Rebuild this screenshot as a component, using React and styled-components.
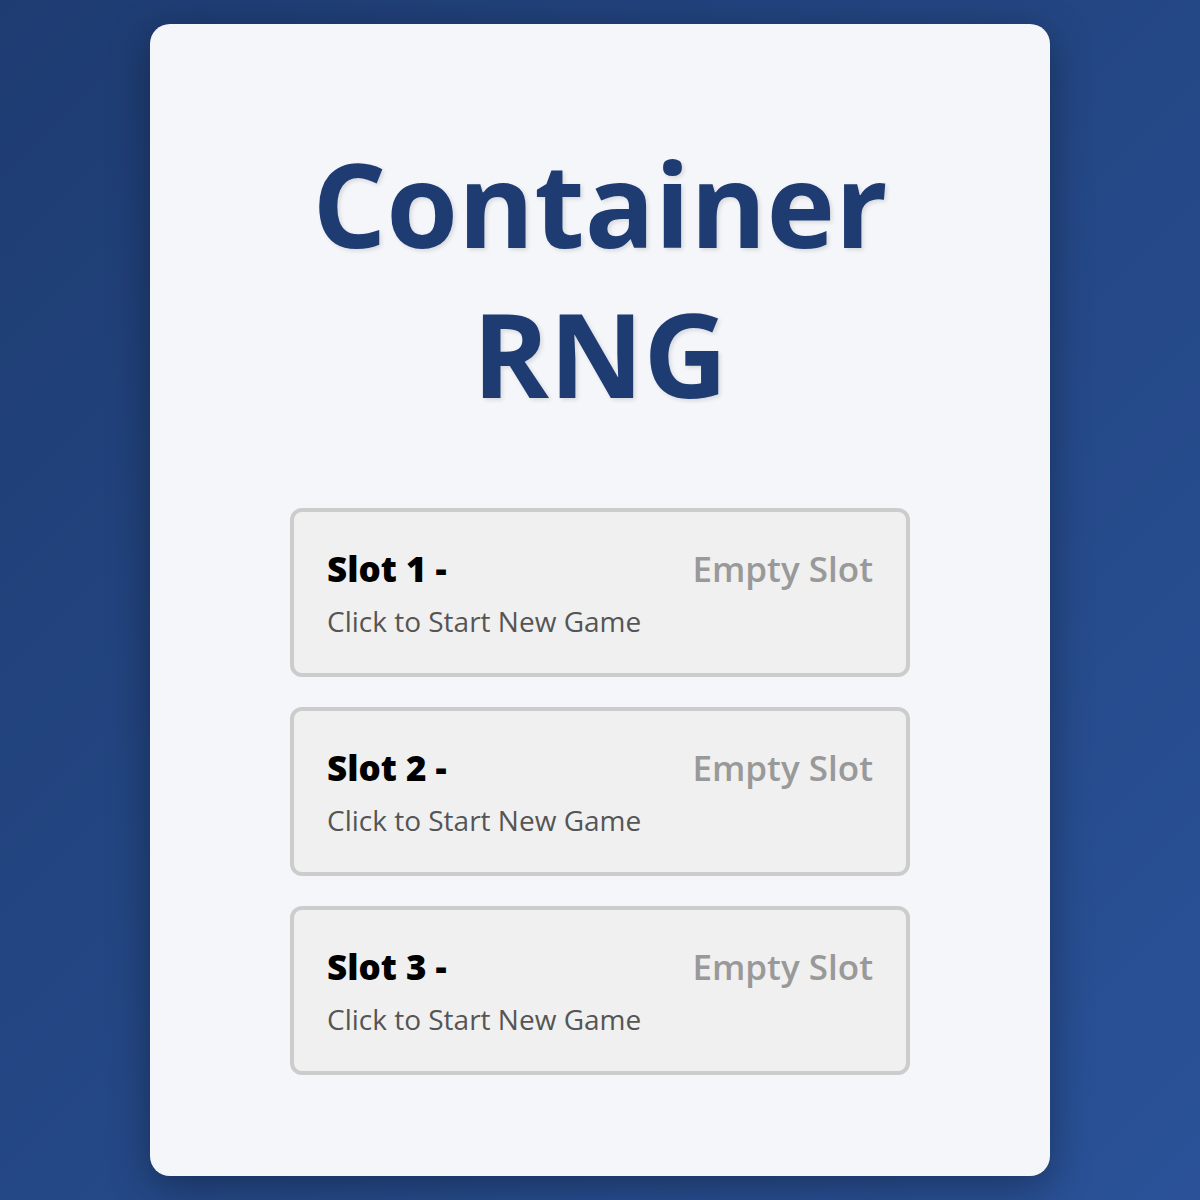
import React from "react";
import styled, { createGlobalStyle } from "styled-components";

const Global = createGlobalStyle`
  html, body { margin: 0; padding: 0; }
  body {
    font-family: "Open Sans", "Liberation Sans", sans-serif;
    background: linear-gradient(135deg, #1e3c72 0%, #2a5298 100%);
    min-height: 100vh;
  }
`;

const Page = styled.div`
  min-height: 100vh;
  box-sizing: border-box;
  padding: 24px 0;
  display: flex;
  justify-content: center;
`;

const Card = styled.main`
  width: 900px;
  box-sizing: border-box;
  background: #f4f6fa;
  border-radius: 20px;
  box-shadow: 0 10px 40px rgba(0, 0, 0, 0.35);
  padding: 104px 60px 96px;
  display: flex;
  flex-direction: column;
  align-items: center;
`;

const Title = styled.h1`
  margin: 0 0 80px;
  font-size: 116px;
  line-height: 150px;
  font-weight: 700;
  color: #1e3c72;
  text-align: center;
  text-shadow: 2px 2px 4px rgba(0, 0, 0, 0.12);
`;

const SlotList = styled.div`
  width: 620px;
  display: flex;
  flex-direction: column;
  gap: 30px;
`;

const Slot = styled.button`
  display: flex;
  flex-direction: column;
  gap: 10px;
  box-sizing: border-box;
  width: 100%;
  padding: 33px 33px 33px;
  background: #f0f0f0;
  border: 4px solid #cccccc;
  border-radius: 12px;
  font-family: inherit;
  text-align: left;
  cursor: pointer;
`;

const SlotHeader = styled.div`
  display: flex;
  justify-content: space-between;
  align-items: baseline;
`;

const SlotName = styled.span`
  font-size: 35px;
  font-weight: 800;
  color: #000;
`;

const SlotStatus = styled.span`
  font-size: 35px;
  font-weight: 600;
  color: #999999;
`;

const SlotHint = styled.span`
  font-size: 28px;
  color: #555555;
`;

const slots = [1, 2, 3];

export default function App() {
  return (
    <>
      <Global />
      <Page>
        <Card>
          <Title>Container RNG</Title>
          <SlotList>
            {slots.map((n) => (
              <Slot key={n}>
                <SlotHeader>
                  <SlotName>Slot {n} -</SlotName>
                  <SlotStatus>Empty Slot</SlotStatus>
                </SlotHeader>
                <SlotHint>Click to Start New Game</SlotHint>
              </Slot>
            ))}
          </SlotList>
        </Card>
      </Page>
    </>
  );
}
